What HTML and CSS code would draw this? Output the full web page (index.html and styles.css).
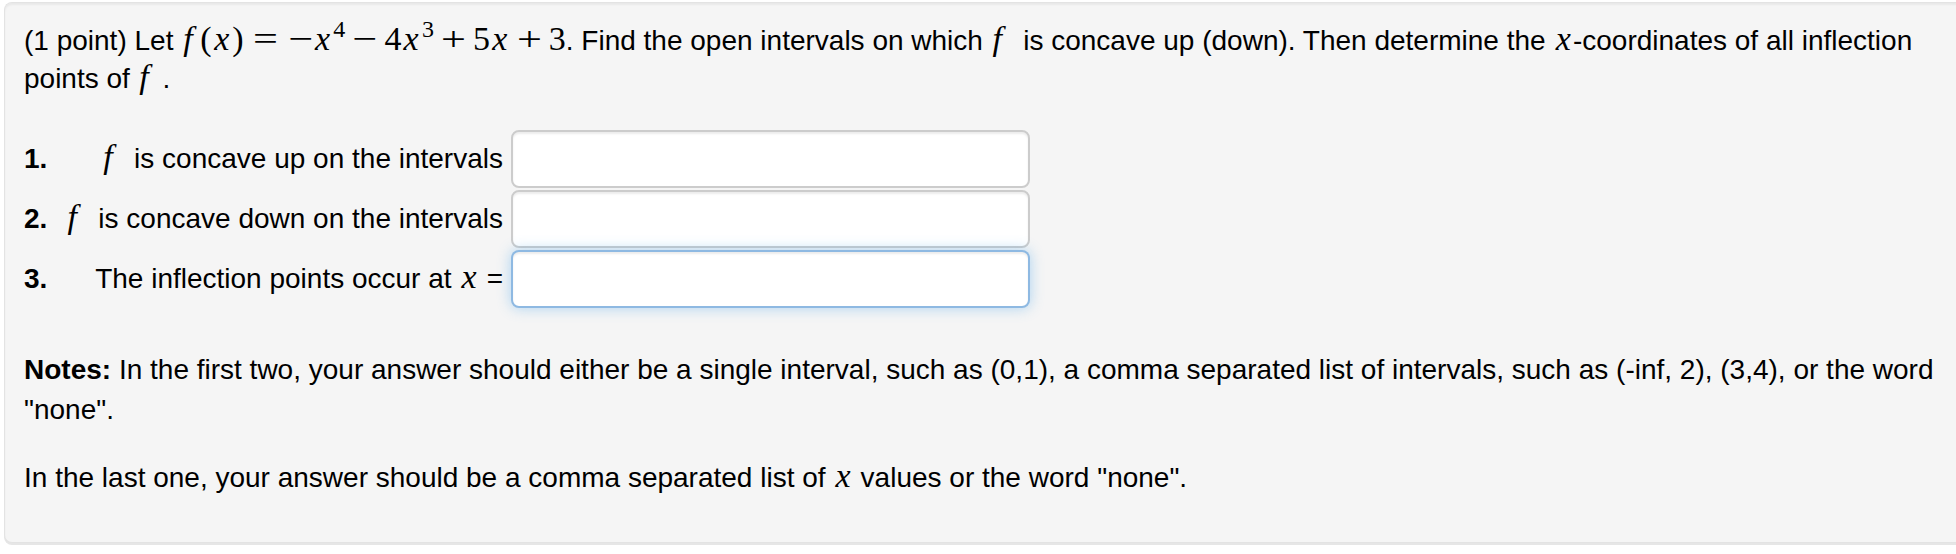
FILE: index.html
```html
<!DOCTYPE html>
<html>
<head>
<meta charset="utf-8">
<link rel="stylesheet" href="styles.css">
</head>
<body>
<div class="well">
  <p class="intro">(1 point) Let <span class="math"><i class="fn">f</i><span class="pr">(</span><i>x</i><span class="pr">)</span><span class="rel">=</span><span class="un">−</span><i>x</i><sup>4</sup><span class="op">−</span>4<i>x</i><sup>3</sup><span class="op">+</span>5<i>x</i><span class="op">+</span>3</span>. Find the open intervals on which <span class="math"><i class="fn solo">f</i></span> is concave up (down). Then determine the <span class="math"><i>x</i></span>-coordinates of all inflection points of <span class="math"><i class="fn solo">f</i></span>.</p>

  <div class="answers">
    <div class="num">1.</div>
    <div class="label"><span class="math"><i class="fn solo">f</i></span> is concave up on the intervals</div>
    <div class="field"><input type="text" class="ans"></div>

    <div class="num">2.</div>
    <div class="label"><span class="math"><i class="fn solo">f</i></span> is concave down on the intervals</div>
    <div class="field"><input type="text" class="ans"></div>

    <div class="num">3.</div>
    <div class="label">The inflection points occur at <span class="math"><i>x</i></span> =</div>
    <div class="field"><input type="text" class="ans focused"></div>
  </div>

  <p class="notes"><b>Notes:</b> In the first two, your answer should either be a single interval, such as (0,1), a comma separated list of intervals, such as (-inf, 2), (3,4), or the word "none".</p>
  <p class="notes last">In the last one, your answer should be a comma separated list of <span class="math"><i>x</i></span> values or the word "none".</p>
</div>
</body>
</html>
```

FILE: styles.css
```css
html, body {
  margin: 0;
  padding: 0;
  background: #ffffff;
  overflow: hidden;
}

body {
  font-family: "Liberation Sans", Arial, Helvetica, sans-serif;
  font-size: 28px;
  color: #000000;
  width: 1956px;
  height: 554px;
}

.well {
  margin: 2px 0 0 4px;
  width: 1990px;
  box-sizing: border-box;
  background: #f5f5f5;
  border: 1px solid #e3e3e3;
  border-right: none;
  border-radius: 8px 0 0 8px;
  box-shadow: inset 0 2px 2px rgba(0, 0, 0, 0.05), 0 2px 0 #e6e6e6;
  padding: 19px 0 44px 19px;
}

p {
  margin: 0;
}

.intro {
  line-height: 38px;
  width: 1940px;
}

.math {
  font-family: "Liberation Serif", "Times New Roman", serif;
  font-size: 34px;
  line-height: 0;
  white-space: nowrap;
}

.math i {
  font-style: italic;
  padding: 0 0.065em;
}

.math i.fn {
  padding: 0 0.2em 0 0.06em;
}

.math i.fn.solo {
  padding: 0 0.4em 0 0.05em;
}

.math .pr {
  padding: 0 0.02em;
}

.math sup {
  font-size: 24px;
  line-height: 0;
  vertical-align: 13px;
  margin-left: 1px;
}

.math .un,
.math .op,
.math .rel {
  display: inline-block;
  line-height: 1;
  transform: scaleX(1.3);
}

.math .un {
  padding: 0 3px;
}

.math .op {
  margin: 0 10px;
}

.math .rel {
  margin: 0 12px;
}

.answers {
  margin-top: 32px;
  display: grid;
  grid-template-columns: 41px 446px 519px;
  row-gap: 2px;
  align-items: center;
}

.num {
  font-weight: bold;
}

.label {
  text-align: right;
  padding-right: 8px;
  white-space: nowrap;
}

.field {
  height: 58px;
}

.ans {
  display: block;
  box-sizing: border-box;
  width: 519px;
  height: 58px;
  margin: 0;
  padding: 8px 12px;
  font: inherit;
  background: #ffffff;
  border: 2px solid #cccccc;
  border-radius: 8px;
  box-shadow: inset 0 2px 2px rgba(0, 0, 0, 0.075);
  outline: none;
}

.ans.focused {
  border-color: rgba(82, 148, 210, 0.65);
  box-shadow: inset 0 2px 2px rgba(0, 0, 0, 0.075), 0 0 14px rgba(82, 168, 236, 0.45);
}

.notes {
  line-height: 40px;
  width: 1945px;
  margin-top: 42px;
}

.notes.last {
  margin-top: 28px;
}
```
